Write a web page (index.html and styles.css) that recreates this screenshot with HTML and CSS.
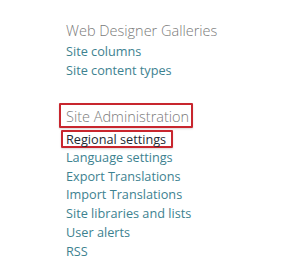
FILE: index.html
```html
<!DOCTYPE html>
<html>

<head>
    <meta charset="utf-8">
    <title>Site Settings</title>
    <link rel="stylesheet" href="styles.css">
</head>

<body>
    <div class="settings">
        <div class="group">
            <h3 class="group-title">Web Designer Galleries</h3>
            <ul class="links">
                <li><a href="#">Site columns</a></li>
                <li><a href="#">Site content types</a></li>
            </ul>
        </div>
        <div class="group">
            <h3 class="group-title"><span class="mark mark-title">Site Administration</span></h3>
            <ul class="links">
                <li><a href="#" class="mark mark-link">Regional settings</a></li>
                <li><a href="#">Language settings</a></li>
                <li><a href="#">Export Translations</a></li>
                <li><a href="#">Import Translations</a></li>
                <li><a href="#">Site libraries and lists</a></li>
                <li><a href="#">User alerts</a></li>
                <li><a href="#">RSS</a></li>
            </ul>
        </div>
    </div>
</body>

</html>
```

FILE: styles.css
```css
* {
    padding: 0;
    margin: 0;
    list-style: none;
    text-decoration: none;
}

body {
    background: #fff;
    font-family: "Open Sans", "Noto Sans", sans-serif;
}

.settings {
    padding: 20px 0 0 66px;
}

.group {
    margin-bottom: 23.6px;
}

.group-title {
    font-size: 14.5px;
    font-weight: 300;
    line-height: 22px;
    color: #7a7a7a;
}

.links li {
    font-size: 12.7px;
    line-height: 18.7px;
}

.links a {
    color: #3d8290;
}

.mark {
    display: block;
    width: fit-content;
    border: 2px solid #c8262e;
    border-radius: 1px;
    box-shadow: 0 1px 2px rgba(0, 0, 0, 0.15);
}

.mark-title {
    margin-left: -7px;
    padding: 3px 2px 1px 5px;
    line-height: 17px;
}

.mark-link {
    margin: 2px 0 0 -5px;
    padding: 0 5px 0 3px;
    line-height: 14px;
    color: #1e2a33 !important;
}
```
